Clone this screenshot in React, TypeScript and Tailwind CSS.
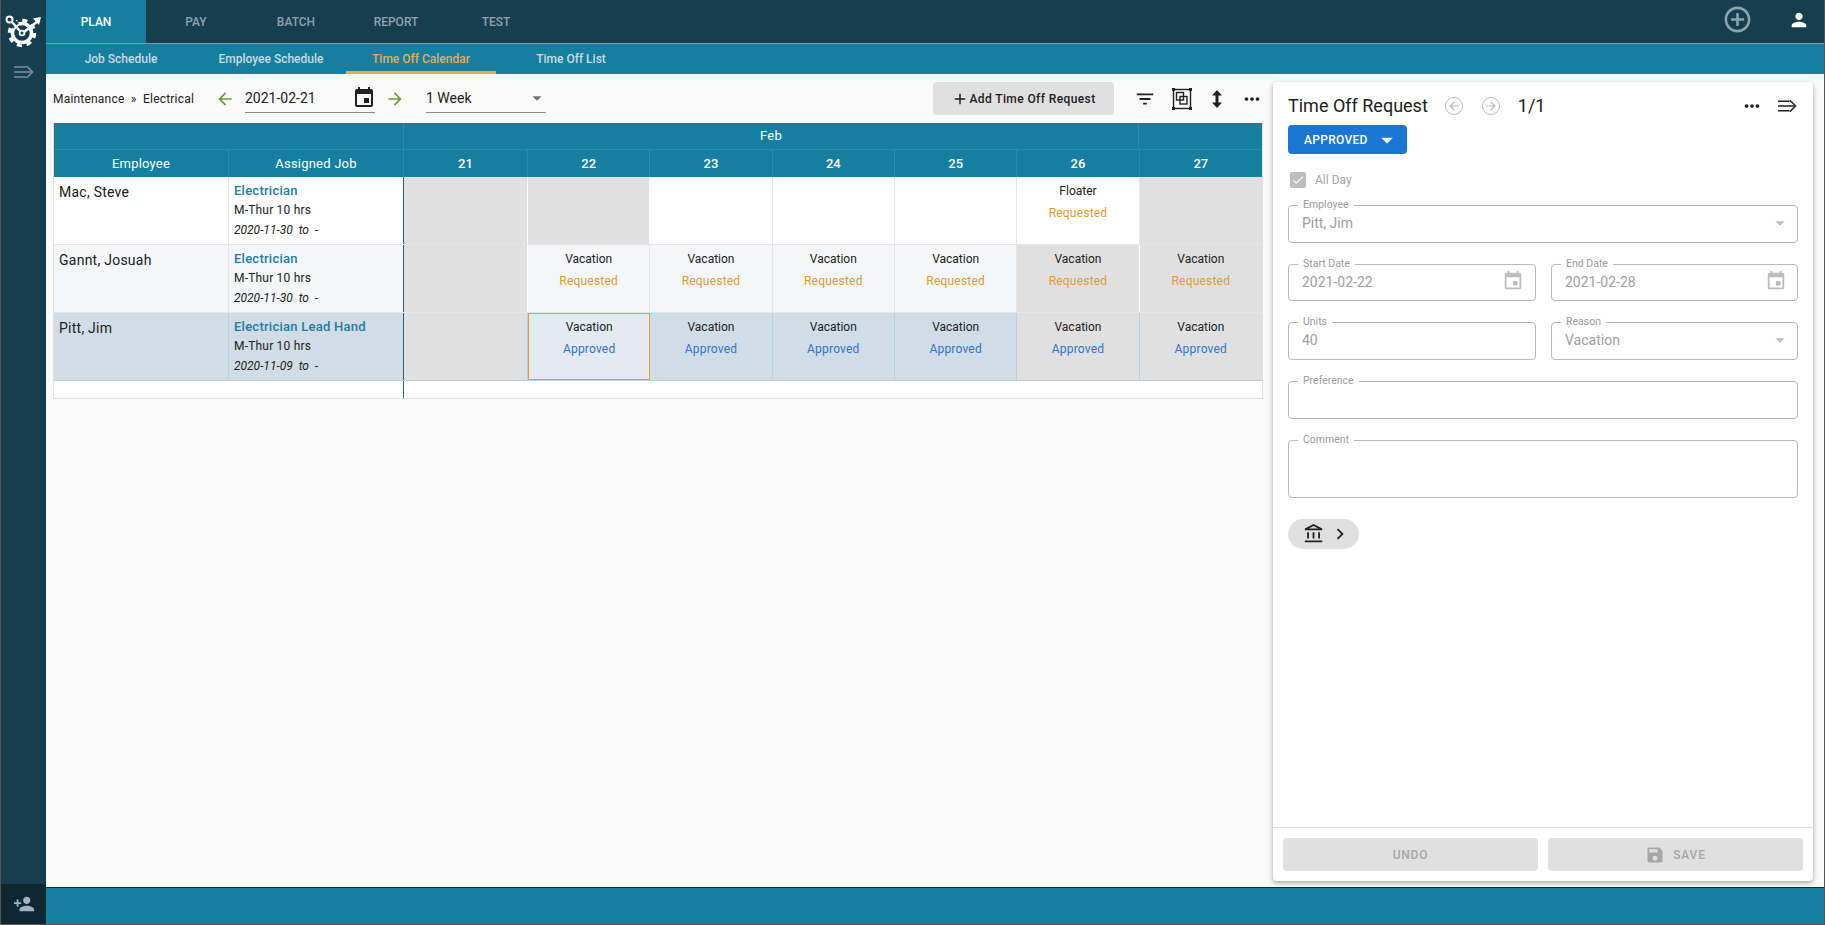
import {
  MdAdd,
  MdAddCircleOutline,
  MdArrowBack,
  MdArrowDropDown,
  MdArrowForward,
  MdCheck,
  MdChevronRight,
  MdEvent,
  MdFilterList,
  MdMoreHoriz,
  MdOutlineAccountBalance,
  MdPerson,
  MdPersonAdd,
  MdSave,
} from "react-icons/md";

const days = [21, 22, 23, 24, 25, 26, 27];

type Cell = { reason?: string; status?: "Requested" | "Approved"; grey?: boolean; selected?: boolean };

const rows: {
  name: string;
  job: string;
  since: string;
  rowBg: string;
  line: string;
  cells: Cell[];
}[] = [
  {
    name: "Mac, Steve",
    job: "Electrician",
    since: "2020-11-30",
    rowBg: "bg-white",
    line: "border-[#e6e6e6]",
    cells: [
      { grey: true },
      { grey: true },
      {},
      {},
      {},
      { reason: "Floater", status: "Requested" },
      { grey: true },
    ],
  },
  {
    name: "Gannt, Josuah",
    job: "Electrician",
    since: "2020-11-30",
    rowBg: "bg-[#f4f7fa]",
    line: "border-[#e6e6e6]",
    cells: [
      { grey: true },
      { reason: "Vacation", status: "Requested" },
      { reason: "Vacation", status: "Requested" },
      { reason: "Vacation", status: "Requested" },
      { reason: "Vacation", status: "Requested" },
      { reason: "Vacation", status: "Requested", grey: true },
      { reason: "Vacation", status: "Requested", grey: true },
    ],
  },
  {
    name: "Pitt, Jim",
    job: "Electrician Lead Hand",
    since: "2020-11-09",
    rowBg: "bg-[#d0dde6]",
    line: "border-[#bccfdc]",
    cells: [
      { grey: true },
      { reason: "Vacation", status: "Approved", selected: true },
      { reason: "Vacation", status: "Approved" },
      { reason: "Vacation", status: "Approved" },
      { reason: "Vacation", status: "Approved" },
      { reason: "Vacation", status: "Approved", grey: true },
      { reason: "Vacation", status: "Approved", grey: true },
    ],
  },
];

function CollapseIcon({ className }: { className: string }) {
  return (
    <svg viewBox="0 0 20 14" className={className} fill="none" stroke="currentColor" strokeWidth="1.6">
      <path d="M0 2h12M0 7h17M0 12h12" />
      <path d="M12.5 1l6 6-6 6" />
    </svg>
  );
}

function Logo() {
  return (
    <svg viewBox="0 0 40 36" className="h-[36px] w-[40px]" fill="none" stroke="#fff">
      <circle cx="19" cy="20" r="9.5" strokeWidth="3.5" />
      <circle cx="19" cy="20" r="12.5" strokeWidth="3.5" strokeDasharray="5 4.8" />
      <path d="M26 7l12-3" stroke="#173e4f" strokeWidth="9" />
      <path d="M5 5l8 8" stroke="#173e4f" strokeWidth="8" />
      <circle cx="6.5" cy="6.5" r="3" strokeWidth="2" />
      <path d="M8.5 8.5l8 9" strokeWidth="2.4" />
      <circle cx="19" cy="20" r="2.4" strokeWidth="1.8" />
      <path d="M21 19l14-11" strokeWidth="2.4" />
      <path d="M30 5.5l8-1.5-2 8z" fill="#fff" stroke="none" />
    </svg>
  );
}

function SelectGroupIcon({ className }: { className: string }) {
  return (
    <svg viewBox="0 0 20 22" className={className} fill="none" stroke="currentColor" strokeWidth="1.4">
      <rect x="1.5" y="1.5" width="17" height="19" />
      <rect x="4.5" y="4.5" width="7" height="7.5" />
      <rect x="8" y="8.5" width="7" height="7.5" />
      <g fill="currentColor" stroke="none">
        <rect x="0" y="0" width="3" height="3" />
        <rect x="17" y="0" width="3" height="3" />
        <rect x="0" y="19" width="3" height="3" />
        <rect x="17" y="19" width="3" height="3" />
      </g>
    </svg>
  );
}

// thick up/down arrow next to the group icon
function RowHeightIcon({ className }: { className: string }) {
  return (
    <svg viewBox="0 0 10 18" className={className} fill="currentColor">
      <path d="M5 0l5 5.5H6.5v7H10L5 18l-5-5.5h3.500v-7H0z" />
    </svg>
  );
}

function Field({
  label,
  value,
  className,
  icon,
  iconRight = "right-[11px]",
}: {
  label: string;
  value?: string;
  className: string;
  icon?: "select" | "date";
  iconRight?: string;
}) {
  return (
    <div className={`relative rounded border border-[#b8b8b8] ${className}`}>
      <span className="absolute top-[-8px] left-[9px] bg-white px-[5px] text-[10.5px] leading-[13px] text-[#9c9c9c]">
        {label}
      </span>
      {value && (
        <span className="absolute top-[8px] left-[13px] text-[14px] leading-[18px] text-[#a0a0a0]">{value}</span>
      )}
      {icon === "select" && (
        <MdArrowDropDown className="absolute top-[6px] right-[6px] h-[22px] w-[22px] text-[#bdbdbd]" />
      )}
      {icon === "date" && <MdEvent className={`absolute top-[5px] h-[22px] w-[22px] text-[#bdbdbd] ${iconRight}`} />}
    </div>
  );
}

export default function App() {
  return (
    <div className="flex h-[925px] w-[1825px] overflow-hidden border-x border-b border-[#555] font-['Roboto',sans-serif] text-[12px] text-[#212121]">
      {/* side rail */}
      <div className="flex w-[45px] shrink-0 flex-col items-center bg-[#173e4f]">
        <div className="mt-[13px] -ml-[1px]">
          <Logo />
        </div>
        <CollapseIcon className="mt-[16px] h-[14px] w-[20px] text-[#7c929c]" />
        <div className="mt-auto flex h-[40px] w-full items-center justify-center bg-[#0f2731]">
          <MdPersonAdd className="h-[22px] w-[22px] text-[#9fb4c0]" />
        </div>
      </div>

      <div className="flex min-w-0 flex-1 flex-col">
        {/* top nav */}
        <div className="flex h-[44px] shrink-0 items-stretch border-b border-[#7fa0ad] bg-[#173e4f] font-medium text-[#8da3ad]">
          {["PLAN", "PAY", "BATCH", "REPORT", "TEST"].map((t) => (
            <div
              key={t}
              className={`flex w-[100px] items-center justify-center ${t === "PLAN" ? "bg-[#147f9f] text-white" : ""}`}
            >
              {t}
            </div>
          ))}
          <MdAddCircleOutline className="mt-[4px] ml-auto h-[31px] w-[31px] text-[#8da3ad]" />
          <MdPerson className="mt-[9px] mr-[14px] ml-[35px] h-[22px] w-[22px] text-white" />
        </div>
        <div className="flex h-[30px] shrink-0 bg-[#147f9f] font-medium text-[#c9dce3]">
          {["Job Schedule", "Employee Schedule", "Time Off Calendar", "Time Off List"].map((t) => (
            <div
              key={t}
              className={`flex w-[150px] items-center justify-center ${
                t === "Time Off Calendar" ? "border-b-[3px] border-[#e5ad4c] pt-[3px] text-[#e9ab5a]" : ""
              }`}
            >
              {t}
            </div>
          ))}
        </div>

        <div className="flex min-h-0 flex-1 border-b border-[#1a2a30] bg-[#fafafa]">
          {/* calendar */}
          <div className="flex w-[1227px] shrink-0 flex-col pl-[7px]">
            <div className="flex h-[49px] shrink-0 items-center pr-[10px]">
              <span className="w-[162px] shrink-0 text-[12px] tracking-[0.2px]">Maintenance&nbsp; »&nbsp; Electrical</span>
              <MdArrowBack className="h-[20px] w-[20px] shrink-0 text-[#689f38]" />
              <div className="ml-[10px] flex h-[29px] w-[130px] items-center justify-between border-b border-[#8a8a8a] text-[14px]">
                2021-02-21
                <MdEvent className="-mr-[1px] h-[24px] w-[24px] text-[#212121]" />
              </div>
              <MdArrowForward className="ml-[10px] h-[20px] w-[20px] text-[#689f38]" />
              <div className="ml-[21px] flex h-[29px] w-[120px] items-center justify-between border-b border-[#8a8a8a] text-[14px]">
                1 Week
                <MdArrowDropDown className="mr-[-2px] h-[22px] w-[22px] text-[#757575]" />
              </div>
              <div className="ml-auto flex h-[33px] w-[181px] items-center justify-center rounded bg-[#e0e0e0] font-medium tracking-[0.4px]">
                <MdAdd className="h-[18px] w-[18px]" />
                Add Time Off Request
              </div>
              <MdFilterList className="ml-[20px] h-[22px] w-[22px]" />
              <SelectGroupIcon className="ml-[16px] h-[22px] w-[20px]" />
              <RowHeightIcon className="mr-[3px] ml-[20px] h-[18px] w-[10px]" />
              <MdMoreHoriz className="ml-[16px] h-[22px] w-[22px]" />
            </div>

            {/* table */}
            <div className="w-[1210px] border border-t-0 border-[#e0e0e0] bg-white">
              <div className="grid h-[54px] grid-cols-[350px_1fr] bg-[#147f9f] text-white">
                <div className="grid grid-rows-[27px_27px] border-r border-[#2a8cab]">
                  <div className="border-b border-[#2a8cab]" />
                  <div className="grid grid-cols-[175px_1fr] text-[13px] tracking-[0.2px]">
                    <div className="flex items-center justify-center border-r border-[#2a8cab]">Employee</div>
                    <div className="flex items-center justify-center">Assigned Job</div>
                  </div>
                </div>
                <div className="grid grid-rows-[27px_27px]">
                  <div className="grid grid-cols-[735px_1fr] border-b border-[#2a8cab] text-[13px] tracking-[0.2px]">
                    <div className="flex items-center justify-center border-r border-[#2a8cab]">Feb</div>
                    <div />
                  </div>
                  <div className="grid grid-cols-[124px_repeat(6,1fr)] text-[13px] font-medium">
                    {days.map((d) => (
                      <div key={d} className="flex items-center justify-center border-r border-[#2a8cab] last:border-r-0">
                        {d}
                      </div>
                    ))}
                  </div>
                </div>
              </div>

              {rows.map((r) => (
                <div key={r.name} className={`grid h-[68px] grid-cols-[350px_1fr] border-b ${r.line} ${r.rowBg}`}>
                  <div className="grid grid-cols-[175px_1fr] border-r border-[#2d5d75]">
                    <div className={`border-r ${r.line} pt-[4px] pl-[5px] text-[14px] leading-[22px] tracking-[0.25px]`}>
                      {r.name}
                    </div>
                    <div className="pt-[6px] pl-[5px]">
                      <div className="text-[13px] leading-[16px] font-medium tracking-[0.25px] text-[#1f7c9c]">{r.job}</div>
                      <div className="mt-[3px] leading-[16px] tracking-[0.2px]">M-Thur 10 hrs</div>
                      <div className="mt-[5px] text-[12px] leading-[15px] italic">{r.since} &nbsp;to&nbsp; -</div>
                    </div>
                  </div>
                  <div className="grid grid-cols-[124px_repeat(6,1fr)]">
                    {r.cells.map((c, i) => (
                      <div
                        key={i}
                        className={`flex flex-col items-center border-r leading-[16px] last:border-r-0 ${
                          c.selected
                            ? "border border-[#e6a020] bg-[#e3eaf1] pt-[5px]"
                            : c.grey
                              ? `${r.name === "Pitt, Jim" ? r.line : "border-white"} bg-[#e0e0e0] pt-[6px]`
                              : `${r.line} pt-[6px]`
                        }`}
                      >
                        {c.reason && <span>{c.reason}</span>}
                        {c.status && (
                          <span
                            className={`mt-[6px] tracking-[0.2px] ${
                              c.status === "Approved" ? "text-[#2f74d0]" : "text-[#e09b2d]"
                            }`}
                          >
                            {c.status}
                          </span>
                        )}
                      </div>
                    ))}
                  </div>
                </div>
              ))}
              <div className="grid h-[17px] grid-cols-[350px_1fr]">
                <div className="border-r border-[#2d5d75]" />
                <div />
              </div>
            </div>
          </div>

          {/* time off request panel */}
          <div className="relative mt-[8px] mb-[6px] flex w-[540px] flex-col rounded bg-white shadow-[0_2px_5px_rgba(0,0,0,0.35)]">
            <div className="px-[15px]">
              <div className="flex h-[43px] items-center pt-[4px]">
                <span className="text-[18px]">Time Off Request</span>
                <MdArrowBack className="ml-[17px] h-[18px] w-[18px] rounded-full border border-[#bdbdbd] p-[1px] text-[#bdbdbd]" />
                <MdArrowForward className="ml-[19px] h-[18px] w-[18px] rounded-full border border-[#bdbdbd] p-[1px] text-[#bdbdbd]" />
                <span className="ml-[18px] text-[18px]">1/1</span>
                <MdMoreHoriz className="ml-auto h-[22px] w-[22px]" />
                <CollapseIcon className="mr-[1px] ml-[15px] h-[14px] w-[19px]" />
              </div>
              <div className="flex h-[29px] w-[119px] items-center rounded bg-[#1976d2] pl-[16px] font-medium tracking-[0.3px] text-white">
                APPROVED
                <MdArrowDropDown className="ml-[5px] h-[28px] w-[28px]" />
              </div>
              <div className="mt-[18px] flex h-[16px] items-center">
                <div className="ml-[2px] flex h-[16px] w-[16px] items-center justify-center rounded-[2px] bg-[#bdbdbd]">
                  <MdCheck className="h-[14px] w-[14px] text-white" />
                </div>
                <span className="ml-[9px] text-[#a8a8a8]">All Day</span>
              </div>
              <Field label="Employee" value="Pitt, Jim" icon="select" className="mt-[17px] h-[38px] w-full" />
              <div className="mt-[21px] grid grid-cols-[248px_247px] gap-x-[15px]">
                <Field label="Start Date" value="2021-02-22" icon="date" className="h-[37px]" />
                <Field label="End Date" value="2021-02-28" icon="date" iconRight="right-[10px]" className="h-[37px]" />
              </div>
              <div className="mt-[21px] grid grid-cols-[248px_247px] gap-x-[15px]">
                <Field label="Units" value="40" className="h-[38px]" />
                <Field label="Reason" value="Vacation" icon="select" className="h-[38px]" />
              </div>
              <Field label="Preference" className="mt-[21px] h-[38px] w-full" />
              <Field label="Comment" className="mt-[21px] h-[58px] w-full" />
              <div className="mt-[21px] flex h-[30px] w-[71px] items-center rounded-full bg-[#e0e0e0] pl-[15px]">
                <MdOutlineAccountBalance className="h-[22px] w-[22px]" />
                <MdChevronRight className="ml-[4px] h-[22px] w-[22px]" />
              </div>
            </div>
            <div className="mt-auto grid h-[54px] grid-cols-2 gap-x-[10px] border-t border-[#e0e0e0] px-[10px] pt-[10px] pb-[10px] font-medium tracking-[0.8px] text-[#a6a6a6]">
              <div className="flex items-center justify-center rounded bg-[#e0e0e0]">UNDO</div>
              <div className="flex items-center justify-center rounded bg-[#e0e0e0]">
                <MdSave className="mr-[8px] h-[20px] w-[20px]" />
                SAVE
              </div>
            </div>
          </div>
        </div>
        <div className="h-[36px] shrink-0 bg-[#147f9f]" />
      </div>
    </div>
  );
}
